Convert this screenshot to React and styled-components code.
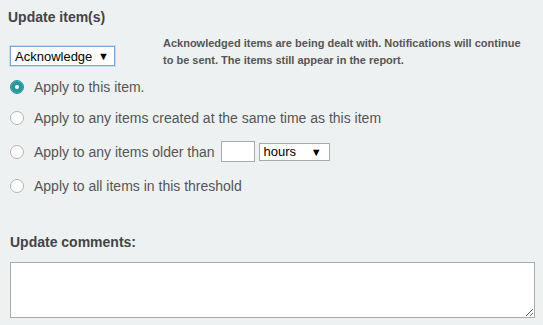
import React from 'react';
import styled, { createGlobalStyle } from 'styled-components';

const GlobalStyle = createGlobalStyle`
    html, body {
        margin: 0;
        background: #eef1f2;
    }
    body {
        font-family: "Liberation Sans", Arial, sans-serif;
        color: #555;
    }
`

const Page = styled.div`
    display: flex;
    flex-direction: column;
    padding: 9px 8px 0 10px;
`
const Title = styled.h3`
    margin: 0 0 0 -2px;
    font-size: 14px;
    line-height: 17px;
    font-weight: bold;
    color: #444;
`
const TopRow = styled.div`
    display: flex;
    align-items: flex-start;
    margin-top: 14px;
`
const SelectWrap = styled.label`
    position: relative;
    display: inline-flex;
    margin-top: ${p => p.top || 0}px;
    &::after {
        content: '▼';
        position: absolute;
        right: ${p => p.arrowRight || 6}px;
        top: 50%;
        transform: translateY(-50%);
        font-size: 11px;
        color: #000;
        pointer-events: none;
    }
`
const Select = styled.select`
    appearance: none;
    -webkit-appearance: none;
    box-sizing: border-box;
    width: ${p => p.w}px;
    height: ${p => p.h}px;
    padding: 0 0 0 4px;
    margin: 0;
    font-family: "Liberation Sans", Arial, sans-serif;
    font-size: 13px;
    color: #000;
    background: #fff;
    border: 1px solid ${p => p.focused ? '#7ea6dc' : '#aaa'};
    ${p => p.focused && `box-shadow: 0 0 0 1px #c5daf3;`}
    border-radius: 0;
    outline: none;
`
const Description = styled.p`
    margin: -5px 0 0 48px;
    font-size: 11px;
    line-height: 17px;
    font-weight: bold;
    color: #555;
`
const Options = styled.div`
    display: flex;
    flex-direction: column;
    margin-top: 3px;
`
const OptionRow = styled.label`
    display: flex;
    align-items: center;
    height: ${p => p.h || 34}px;
    font-size: 14px;
    color: #555;
`
const Radio = styled.input.attrs({ type: 'radio' })`
    appearance: none;
    -webkit-appearance: none;
    box-sizing: border-box;
    width: 14px;
    height: 14px;
    margin: 0 10px 0 0;
    border-radius: 50%;
    border: 1px solid #b4b4b4;
    background: #fff;
    flex-shrink: 0;
    &:checked {
        border-color: #23999c;
        background: #23999c;
        box-shadow: inset 0 0 0 4px #23999c, inset 0 0 0 7px #fff;
    }
`
const NumberInput = styled.input`
    box-sizing: border-box;
    width: 34px;
    height: 21px;
    margin: 0 4px 0 6px;
    border: 1px solid #aaa;
    background: #fff;
    outline: none;
`
const SectionTitle = styled.h3`
    margin: 31px 0 0 0;
    font-size: 14px;
    line-height: 17px;
    font-weight: bold;
    color: #444;
`
const Comments = styled.textarea`
    box-sizing: border-box;
    width: 525px;
    height: 56px;
    margin-top: 11px;
    border: 1px solid #aaa;
    background: #fff;
    outline: none;
    font-family: "Liberation Sans", Arial, sans-serif;
`

const App = () => {
    const [choice, setChoice] = React.useState('this')

    const options = [
        { key: 'this', label: 'Apply to this item.', h: 29 },
        { key: 'same', label: 'Apply to any items created at the same time as this item', h: 33 },
        { key: 'older', label: 'Apply to any items older than', h: 35 },
        { key: 'all', label: 'Apply to all items in this threshold', h: 34 },
    ]

    return (
        <Page>
            <GlobalStyle />
            <Title>Update item(s)</Title>
            <TopRow>
                <SelectWrap top={6} arrowRight={6}>
                    <Select w={105} h={20} focused defaultValue="ack">
                        <option value="ack">Acknowledge</option>
                        <option value="res">Resolve</option>
                    </Select>
                </SelectWrap>
                <Description>
                    Acknowledged items are being dealt with. Notifications will continue<br />
                    to be sent. The items still appear in the report.
                </Description>
            </TopRow>
            <Options>
                {options.map(o => (
                    <OptionRow key={o.key} h={o.h}>
                        <Radio name="apply" checked={choice === o.key} onChange={() => setChoice(o.key)} />
                        {o.label}
                        {o.key === 'older' && (
                            <>
                                <NumberInput />
                                <SelectWrap arrowRight={8}>
                                    <Select w={71} h={18} defaultValue="hours">
                                        <option value="hours">hours</option>
                                        <option value="days">days</option>
                                    </Select>
                                </SelectWrap>
                            </>
                        )}
                    </OptionRow>
                ))}
            </Options>
            <SectionTitle>Update comments:</SectionTitle>
            <Comments />
        </Page>
    )
}

export default App;
